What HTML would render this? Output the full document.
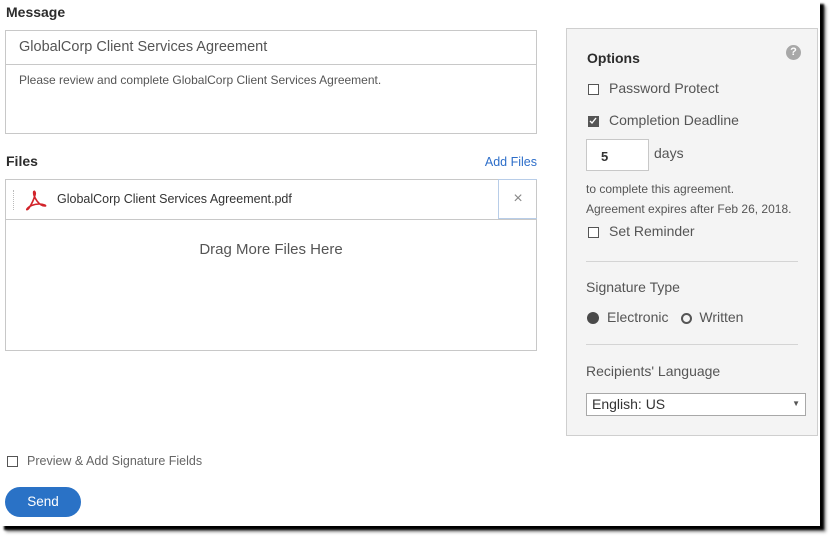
<!DOCTYPE html>
<html><head><meta charset="utf-8"><style>
*{box-sizing:border-box;margin:0;padding:0}
body{width:830px;height:537px;background:#fff;font-family:"Liberation Sans",sans-serif;color:#4b4b4b;position:relative;overflow:hidden}
.page{position:absolute;left:0;top:0;width:820px;height:526px;background:#fff;box-shadow:4px 4px 2px #000,6px 6px 3px rgba(0,0,0,.4)}
.abs{position:absolute}
h3{font-size:14px;font-weight:bold;color:#2c2c2c}
.box{border:1px solid #c8c8c8;background:#fff}
.cb{display:inline-block;width:11px;height:11px;border:1.5px solid #555;background:#fff;vertical-align:middle}
</style></head><body>
<div class="page">
<h3 class="abs" style="left:6px;top:4px">Message</h3>
<div class="abs box" style="left:5px;top:30px;width:532px;height:104px">
 <div style="height:34px;border-bottom:1px solid #c8c8c8;padding:8px 13px;font-size:14.5px;color:#555">GlobalCorp Client Services Agreement</div>
 <div style="padding:8px 13px;font-size:12px;color:#555">Please review and complete GlobalCorp Client Services Agreement.</div>
</div>
<h3 class="abs" style="left:6px;top:153px">Files</h3>
<div class="abs" style="right:283px;top:155px;font-size:12.5px;color:#2d6ec9">Add Files</div>
<div class="abs box" style="left:5px;top:179px;width:532px;height:172px">
 <div style="height:40px;border-bottom:1px solid #c8c8c8;position:relative">
  <div class="abs" style="left:7px;top:10px;height:20px;border-left:1px dotted #bbb"></div>
  <svg class="abs" style="left:18px;top:9px" width="24" height="22" viewBox="0 0 24 22"><path d="M10 2c-1 2 0 6 3 10s6 5 8 5c2 0-1-2-6-2s-10 2-12 5c-1 1 1 1 2-1 2-3 5-9 6-13 1-3-1-4-1-4" fill="none" stroke="#d2232a" stroke-width="1.6"/></svg>
  <div class="abs" style="left:51px;top:12px;font-size:12.5px;color:#333">GlobalCorp Client Services Agreement.pdf</div>
  <div class="abs" style="left:492px;top:-1px;width:39px;height:40px;border:1px solid #b8cde8;border-right:none;text-align:center;line-height:38px;color:#888;font-size:16px">×</div>
 </div>
 <div style="text-align:center;padding-top:21px;font-size:15px;color:#555">Drag More Files Here</div>
</div>
<div class="abs" style="left:7px;top:454px;font-size:12.5px;color:#666"><span class="cb" style="margin-right:9px"></span>Preview &amp; Add Signature Fields</div>
<div class="abs" style="left:5px;top:487px;width:76px;height:30px;border-radius:15px;background:#2a72c6;color:#fff;font-size:13.5px;text-align:center;line-height:30px">Send</div>

<div class="abs" style="left:566px;top:28px;width:252px;height:408px;background:#f4f4f4;border:1px solid #cfcfcf">
 <h3 class="abs" style="left:20px;top:21px">Options</h3>
 <div class="abs" style="left:219px;top:16px;width:15px;height:15px;border-radius:50%;background:#a8a8a8;color:#fff;font-size:11px;font-weight:bold;text-align:center;line-height:15px">?</div>
 <div class="abs" style="left:21px;top:51px;font-size:14px;color:#555"><span class="cb" style="margin-right:10px"></span>Password Protect</div>
 <div class="abs" style="left:21px;top:83px;font-size:14px;color:#555"><span class="cb" style="margin-right:10px;background:#555;position:relative"><svg class="abs" style="left:0;top:0" width="8" height="8" viewBox="0 0 8 8"><path d="M1 4l2 2 4-5" stroke="#fff" stroke-width="1.4" fill="none"/></svg></span>Completion Deadline</div>
 <div class="abs box" style="left:19px;top:110px;width:63px;height:32px;font-size:13px;font-weight:bold;padding:9px 14px;color:#333">5</div>
 <div class="abs" style="left:87px;top:116px;font-size:14px;color:#555">days</div>
 <div class="abs" style="left:19px;top:150px;font-size:12px;line-height:20px;color:#555">to complete this agreement.<br>Agreement expires after Feb 26, 2018.</div>
 <div class="abs" style="left:21px;top:194px;font-size:14px;color:#555"><span class="cb" style="margin-right:10px"></span>Set Reminder</div>
 <div class="abs" style="left:19px;top:232px;width:212px;border-top:1px solid #d4d4d4"></div>
 <div class="abs" style="left:19px;top:250px;font-size:14px;color:#555">Signature Type</div>
 <div class="abs" style="left:20px;top:280px;font-size:14px;color:#555"><span style="display:inline-block;width:12px;height:12px;border-radius:50%;background:#4a4a4a;vertical-align:middle;margin-right:8px"></span>Electronic <span style="display:inline-block;width:11px;height:11px;border-radius:50%;border:2px solid #555;vertical-align:middle;margin:0 7px 0 9px"></span>Written</div>
 <div class="abs" style="left:19px;top:315px;width:212px;border-top:1px solid #d4d4d4"></div>
 <div class="abs" style="left:19px;top:334px;font-size:14px;color:#555">Recipients' Language</div>
 <div class="abs" style="left:19px;top:364px;width:220px;height:23px;background:#fff;border:1px solid #a8a8a8;font-size:14px;color:#333;padding:2px 5px">English: US<span class="abs" style="right:5px;top:5px;font-size:8px;color:#555">▼</span></div>
</div>
</div>
</body></html>
